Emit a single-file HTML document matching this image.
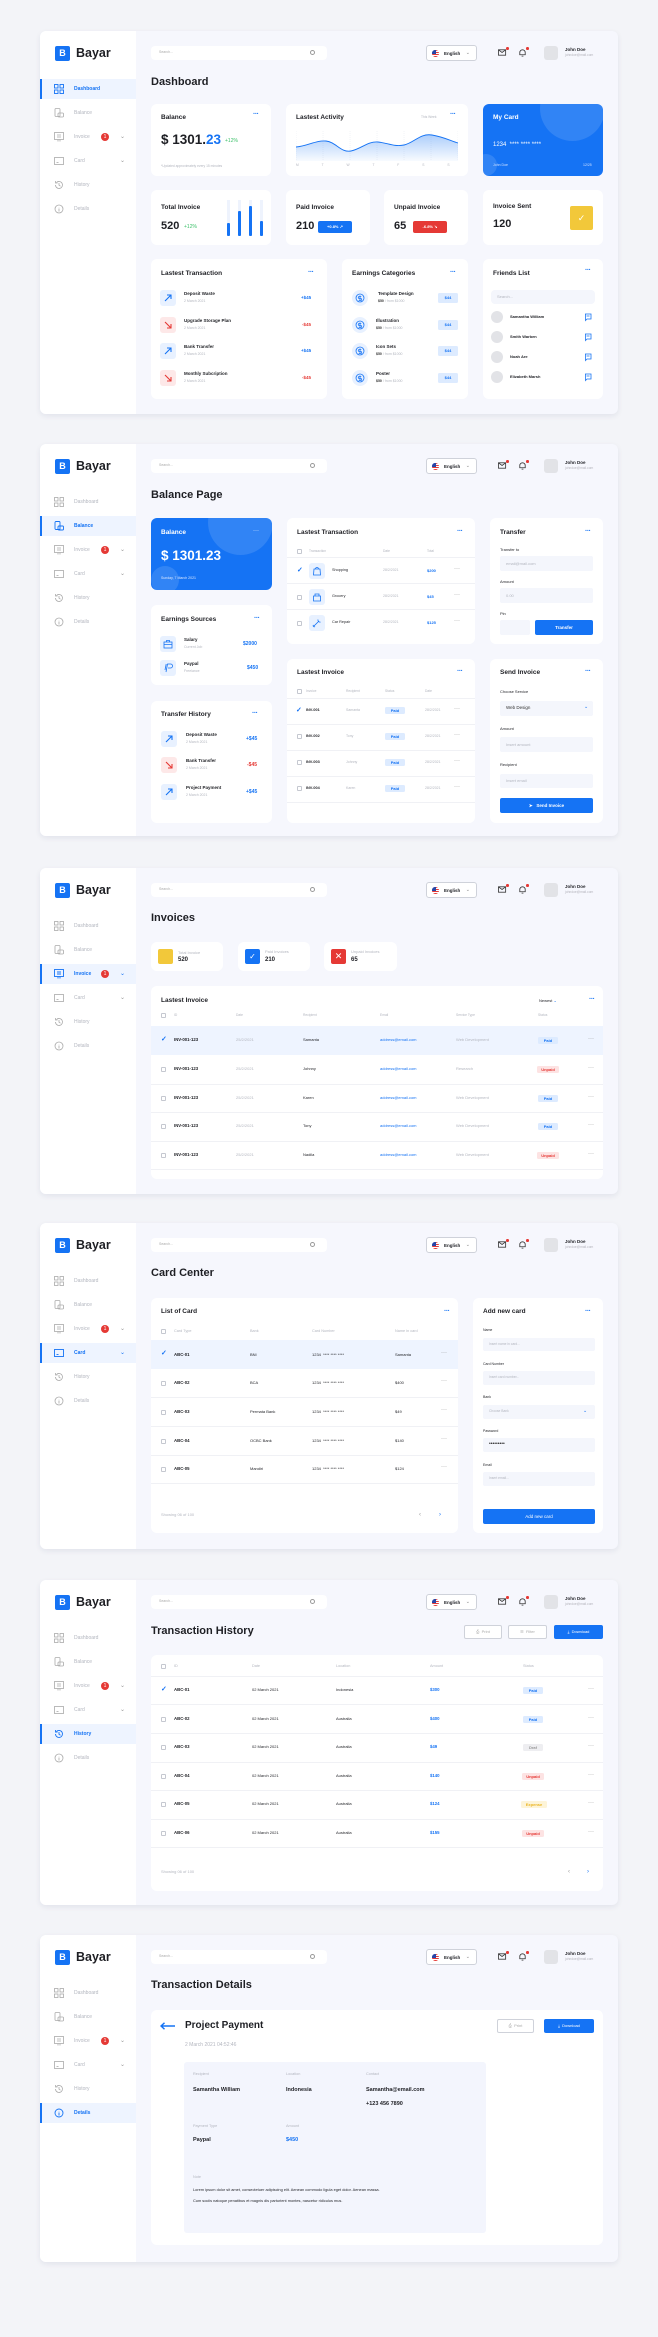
<!DOCTYPE html>
<html><head><meta charset="utf-8">
<style>
*{margin:0;padding:0;box-sizing:border-box}
body{width:658px;height:2337px;background:#f3f4f8;font-family:"Liberation Sans",sans-serif;position:relative;overflow:hidden;color:#1e1f24}
.p{position:absolute;left:40px;width:578px;background:#f6f7fd;border-radius:6px;overflow:hidden;box-shadow:0 2px 6px rgba(30,40,90,.08)}
.side{position:absolute;left:0;top:0;bottom:0;width:96px;background:#fff}
.logo{position:absolute;left:15px;top:15px;width:15px;height:15px;background:#1573f4;border-radius:2px;color:#fff;font-weight:bold;font-size:9px;text-align:center;line-height:15px}
.brand{position:absolute;left:36px;top:16px;font-size:12.5px;font-weight:bold;color:#1e1f24;line-height:1}
.nav{position:absolute;left:0;width:96px;height:20px}
.nav span{position:absolute;left:34px;top:7.5px;font-size:5px;color:#b3b6bf;line-height:1}
.nav svg{position:absolute;left:14px;top:5px;width:10px;height:10px}
.nav.on{background:#eef4ff;box-shadow:inset 2px 0 #1573f4}
.nav.on span{color:#1573f4;font-weight:bold}
.bd{position:absolute;left:61px;top:6px;width:8px;height:8px;border-radius:50%;background:#e53935;color:#fff;font-size:5px;text-align:center;line-height:8px}
.cv{position:absolute;left:80px;top:6px;font-size:6px;color:#999}
.srch{position:absolute;left:111px;top:15px;width:176px;height:14px;background:#fff;border-radius:4px}
.srch span{position:absolute;left:8px;top:5px;font-size:3.5px;color:#aaa;line-height:1}
.mag{position:absolute;right:12px;top:4px;width:5px;height:5px;border:1px solid #999;border-radius:50%}
.lang{position:absolute;left:386px;top:14px;width:51px;height:16px;border:1px solid #cfd2da;border-radius:3px;background:#fff}
.lang span{position:absolute;left:17px;top:5.5px;font-size:4.5px;font-weight:bold;line-height:1}
.flag{position:absolute;left:5px;top:4px;width:7px;height:7px;border-radius:50%;background:repeating-linear-gradient(#e53935 0 1px,#fff 1px 2px)}
.flag:before{content:"";position:absolute;left:0;top:0;width:4px;height:3.5px;background:#2646a8;border-radius:3px 0 0 0}
.lang i.c{position:absolute;right:6px;top:4px;font-size:5px;font-style:normal;color:#888}
.ic{position:absolute;width:9px;height:9px}
.dot{position:absolute;width:2.5px;height:2.5px;border-radius:50%;background:#e53935}
.av{position:absolute;left:504px;top:15px;width:14px;height:14px;border-radius:3px;background:#e2e3e7}
.un{position:absolute;left:525px;top:17px;font-size:4.5px;font-weight:bold;line-height:1}
.um{position:absolute;left:525px;top:23px;font-size:3.3px;color:#b5b5bd;line-height:1}
.tt{position:absolute;left:111px;font-size:11px;font-weight:bold;line-height:1;color:#1e1f24}
.c{position:absolute;background:#fff;border-radius:6px}
.t{position:absolute;line-height:1;white-space:nowrap}
.h{font-size:6.5px;font-weight:bold;color:#1e1f24}
.s{font-size:4px;color:#b3b6bf}
.m{font-size:4.5px;color:#1e1f24}
.b{color:#1573f4}
.r{color:#e53935}
.g{color:#3ec16b}
.dd{position:absolute;font-size:7px;color:#1573f4;line-height:1;letter-spacing:-.5px;font-weight:bold}
.dg{position:absolute;font-size:6px;color:#888;line-height:1}
.ib{position:absolute;width:16px;height:16px;border-radius:3px}
.ib.bl{background:#e8f1ff}.ib.rd{background:#fde8e8}
.ib svg{position:absolute;left:3px;top:3px;width:10px;height:10px}
.pill{position:absolute;height:7px;border-radius:1.5px;font-size:4px;line-height:7px;text-align:center;font-weight:bold}
.pd{background:#ddebff;color:#1573f4}.up{background:#fde3e3;color:#e53935}.dr{background:#eeeef1;color:#999}.ex{background:#fdf4d8;color:#eab422}
.cb{position:absolute;width:5px;height:5px;border:.7px solid #c5c8d0;border-radius:1px}
.ck{position:absolute;font-size:7px;color:#1573f4;line-height:1;font-weight:bold}
.ln{position:absolute;height:1px;background:#f0f1f5}
.hl{position:absolute;background:#eef4ff}
.inp{position:absolute;background:#f4f6fc;border-radius:2px}
.inp span{position:absolute;left:6px;font-size:4px;color:#b3b6bf;line-height:1}
.btn{position:absolute;background:#1573f4;border-radius:2px;color:#fff;font-size:4.5px;text-align:center;font-weight:bold}
.ob{position:absolute;border:1px solid #cfd2da;border-radius:2px;background:#fff;font-size:4px;color:#aaa;text-align:center}
</style></head><body>

<!-- shared sidebar svg icons used inline -->

<!-- PANEL 1 -->
<div class="p" style="top:31px;height:383px">
<div class="side"><div class="logo">B</div><div class="brand">Bayar</div>
<div class="nav on" style="top:48px"><svg viewBox="0 0 10 10" fill="none" stroke="#1573f4" stroke-width=".9"><rect x=".5" y=".5" width="3.5" height="3.5"/><rect x="6" y=".5" width="3.5" height="3.5"/><rect x=".5" y="6" width="3.5" height="3.5"/><rect x="6" y="6" width="3.5" height="3.5"/></svg><span>Dashboard</span></div>
<div class="nav" style="top:72px"><svg viewBox="0 0 10 10" fill="none" stroke="#aaa" stroke-width=".8"><rect x="1" y=".5" width="5" height="8" rx="1"/><rect x="4" y="5" width="5.5" height="4" rx="1"/></svg><span>Balance</span></div>
<div class="nav" style="top:96px"><svg viewBox="0 0 10 10" fill="none" stroke="#aaa" stroke-width=".8"><rect x=".5" y=".5" width="9" height="7"/><path d="M3 3h4M3 5h4M4 7.5v2M6 7.5v2"/></svg><span>Invoice</span><div class="bd">1</div><div class="cv">⌄</div></div>
<div class="nav" style="top:120px"><svg viewBox="0 0 10 10" fill="none" stroke="#aaa" stroke-width=".8"><rect x=".5" y="1.5" width="9" height="7"/><path d="M2.5 6.5h2"/></svg><span>Card</span><div class="cv">⌄</div></div>
<div class="nav" style="top:144px"><svg viewBox="0 0 10 10" fill="none" stroke="#aaa" stroke-width=".8"><path d="M1.5 5a3.5 3.5 0 1 0 1-2.5M1.5 1v2h2M5 3v2.2l1.5 1"/></svg><span>History</span></div>
<div class="nav" style="top:168px"><svg viewBox="0 0 10 10" fill="none" stroke="#aaa" stroke-width=".8"><circle cx="5" cy="5" r="4"/><path d="M5 4.5v3M5 3v.3"/></svg><span>Details</span></div>
</div>
<div class="srch"><span>Search...</span><i class="mag"></i></div>
<div class="lang"><i class="flag"></i><span>English</span><i class="c">⌄</i></div>
<svg class="ic" style="left:458px;top:17px" viewBox="0 0 10 10" fill="none" stroke="#333" stroke-width=".9"><rect x=".5" y="2" width="8" height="6"/><path d="M.5 2l4 3 4-3"/></svg><i class="dot" style="left:466px;top:16px"></i>
<svg class="ic" style="left:478px;top:17px" viewBox="0 0 10 10" fill="none" stroke="#333" stroke-width=".9"><path d="M2 7.5V5a3 3 0 0 1 6 0v2.5H1.5h7M4 9h2"/></svg><i class="dot" style="left:486px;top:16px"></i>
<div class="av"></div><div class="un">John Doe</div><div class="um">johndoe@mail.com</div>
<div class="tt" style="top:46px">Dashboard</div>

<div class="c" style="left:111px;top:73px;width:120px;height:72px">
<div class="t h" style="left:10px;top:11px">Balance</div><div class="dd" style="left:102px;top:7px">···</div>
<div class="t" style="left:10px;top:29px;font-size:13.5px;font-weight:bold">$ 1301.<span class="b">23</span></div>
<div class="t g" style="left:74px;top:35px;font-size:5px">+12%</div>
<div class="t s" style="left:10px;top:61px;font-size:3.3px">*Updated approximately every 15 minutes</div>
</div>
<div class="c" style="left:246px;top:73px;width:182px;height:72px">
<div class="t h" style="left:10px;top:11px">Lastest Activity</div><div class="t s" style="left:135px;top:12px;font-size:3.3px">This Week</div><div class="dd" style="left:164px;top:7px">···</div>
<svg style="position:absolute;left:10px;top:27px" width="162" height="30" viewBox="0 0 162 30"><defs><linearGradient id="gr" x1="0" y1="0" x2="0" y2="1"><stop offset="0" stop-color="#1573f4" stop-opacity=".35"/><stop offset="1" stop-color="#1573f4" stop-opacity=".03"/></linearGradient></defs><g stroke="#e6e8ef" stroke-width=".5" stroke-dasharray="1 1"><path d="M0 0v30M27 0v30M54 0v30M81 0v30M108 0v30M135 0v30M162 0v30"/></g><path d="M0 16C12 15 20 9 30 10S45 22 55 20S72 10 82 11S98 16 108 14S124 2 136 4S155 10 162 12V30H0Z" fill="url(#gr)"/><path d="M0 16C12 15 20 9 30 10S45 22 55 20S72 10 82 11S98 16 108 14S124 2 136 4S155 10 162 12" fill="none" stroke="#1573f4" stroke-width=".9"/></svg>
<div class="t s" style="left:10px;top:60px;font-size:3.3px;word-spacing:22px">M T W T F S S</div>
</div>
<div class="c" style="left:443px;top:73px;width:120px;height:72px;background:#1573f4;overflow:hidden">
<div style="position:absolute;left:57px;top:-28px;width:65px;height:65px;border-radius:50%;background:rgba(255,255,255,.12)"></div>
<div style="position:absolute;left:-8px;top:50px;width:22px;height:22px;border-radius:50%;background:rgba(255,255,255,.12)"></div>
<div class="t h" style="left:10px;top:11px;color:#fff">My Card</div>
<div class="t" style="left:10px;top:38px;font-size:6px;color:#fff">1234 &nbsp;**** **** ****</div>
<div class="t" style="left:10px;top:60px;font-size:3.5px;color:#cfe0ff">John Doe</div><div class="t" style="left:100px;top:60px;font-size:3.5px;color:#cfe0ff">12/25</div>
</div>

<div class="c" style="left:111px;top:159px;width:120px;height:55px">
<div class="t h" style="left:10px;top:15px">Total Invoice</div>
<div class="t" style="left:10px;top:31px;font-size:11px;font-weight:bold">520</div><div class="t g" style="left:33px;top:35px;font-size:5px">+12%</div>
<div style="position:absolute;left:76px;top:10px;width:3px;height:36px;background:#eef3fd"></div><div style="position:absolute;left:76px;top:33px;width:3px;height:13px;background:#1573f4;border-radius:1px"></div>
<div style="position:absolute;left:87px;top:10px;width:3px;height:36px;background:#eef3fd"></div><div style="position:absolute;left:87px;top:21px;width:3px;height:25px;background:#1573f4;border-radius:1px"></div>
<div style="position:absolute;left:98px;top:10px;width:3px;height:36px;background:#eef3fd"></div><div style="position:absolute;left:98px;top:16px;width:3px;height:30px;background:#1573f4;border-radius:1px"></div>
<div style="position:absolute;left:109px;top:10px;width:3px;height:36px;background:#eef3fd"></div><div style="position:absolute;left:109px;top:31px;width:3px;height:15px;background:#1573f4;border-radius:1px"></div>
</div>
<div class="c" style="left:246px;top:159px;width:84px;height:55px">
<div class="t h" style="left:10px;top:15px">Paid Invoice</div>
<div class="t" style="left:10px;top:31px;font-size:11px;font-weight:bold">210</div>
<div class="pill" style="left:32px;top:31px;width:34px;height:12px;line-height:12px;background:#1573f4;color:#fff;border-radius:2px">+0.8% ↗</div>
</div>
<div class="c" style="left:344px;top:159px;width:84px;height:55px">
<div class="t h" style="left:10px;top:15px">Unpaid Invoice</div>
<div class="t" style="left:10px;top:31px;font-size:11px;font-weight:bold">65</div>
<div class="pill" style="left:29px;top:31px;width:34px;height:12px;line-height:12px;background:#e53935;color:#fff;border-radius:2px">-6.8% ↘</div>
</div>
<div class="c" style="left:443px;top:159px;width:120px;height:55px">
<div class="t h" style="left:10px;top:14px">Invoice Sent</div>
<div class="t" style="left:10px;top:29px;font-size:11px;font-weight:bold">120</div>
<div style="position:absolute;left:87px;top:16px;width:23px;height:24px;background:#f2c83a;border-radius:2px;color:#fff;font-size:9px;text-align:center;line-height:24px">✓</div>
</div>

<div class="c" style="left:111px;top:228px;width:176px;height:140px">
<div class="t h" style="left:10px;top:12px">Lastest Transaction</div><div class="dd" style="left:157px;top:10px">···</div>
<div class="ib bl" style="left:9px;top:31px"><svg viewBox="0 0 10 10" fill="none" stroke="#1573f4" stroke-width="1.1"><path d="M2 8l6-6M4 2h4v4"/></svg></div>
<div class="t m" style="left:33px;top:33px;font-weight:bold">Deposit Waste</div><div class="t s" style="left:33px;top:41px;font-size:3.5px">2 March 2021</div><div class="t b" style="left:150px;top:37px;font-size:4.5px;font-weight:bold">+$45</div>
<div class="ib rd" style="left:9px;top:58px"><svg viewBox="0 0 10 10" fill="none" stroke="#e53935" stroke-width="1.1"><path d="M2 2l6 6M8 4v4H4"/></svg></div>
<div class="t m" style="left:33px;top:60px;font-weight:bold">Upgrade Storage Plan</div><div class="t s" style="left:33px;top:68px;font-size:3.5px">2 March 2021</div><div class="t r" style="left:151px;top:64px;font-size:4.5px;font-weight:bold">-$45</div>
<div class="ib bl" style="left:9px;top:84px"><svg viewBox="0 0 10 10" fill="none" stroke="#1573f4" stroke-width="1.1"><path d="M2 8l6-6M4 2h4v4"/></svg></div>
<div class="t m" style="left:33px;top:86px;font-weight:bold">Bank Transfer</div><div class="t s" style="left:33px;top:94px;font-size:3.5px">2 March 2021</div><div class="t b" style="left:150px;top:90px;font-size:4.5px;font-weight:bold">+$45</div>
<div class="ib rd" style="left:9px;top:111px"><svg viewBox="0 0 10 10" fill="none" stroke="#e53935" stroke-width="1.1"><path d="M2 2l6 6M8 4v4H4"/></svg></div>
<div class="t m" style="left:33px;top:113px;font-weight:bold">Monthly Subcription</div><div class="t s" style="left:33px;top:121px;font-size:3.5px">2 March 2021</div><div class="t r" style="left:151px;top:117px;font-size:4.5px;font-weight:bold">-$45</div>
</div>
<div class="c" style="left:302px;top:228px;width:126px;height:140px">
<div class="t h" style="left:10px;top:12px">Earnings Categories</div><div class="dd" style="left:108px;top:10px">···</div>
<div class="ib bl" style="left:10px;top:31px;border-radius:50%"><svg viewBox="0 0 10 10" fill="none" stroke="#1573f4" stroke-width=".8"><circle cx="5" cy="5" r="4"/><path d="M6.3 3.5H4.3a1 1 0 0 0 0 2h1.4a1 1 0 0 1 0 2H3.7M5 2.5v5"/></svg></div>
<div class="t m" style="left:36px;top:33px;font-weight:bold">Template Design</div><div class="t s" style="left:36px;top:41px;font-size:3.5px"><b style="color:#333">$50</b> / from $1000</div><div class="pill pd" style="left:96px;top:34px;width:20px;height:10px;line-height:10px">$44</div>
<div class="ib bl" style="left:10px;top:58px;border-radius:50%"><svg viewBox="0 0 10 10" fill="none" stroke="#1573f4" stroke-width=".8"><circle cx="5" cy="5" r="4"/><path d="M6.3 3.5H4.3a1 1 0 0 0 0 2h1.4a1 1 0 0 1 0 2H3.7M5 2.5v5"/></svg></div>
<div class="t m" style="left:34px;top:60px;font-weight:bold">Illustration</div><div class="t s" style="left:34px;top:68px;font-size:3.5px"><b style="color:#333">$50</b> / from $1000</div><div class="pill pd" style="left:96px;top:61px;width:20px;height:10px;line-height:10px">$44</div>
<div class="ib bl" style="left:10px;top:84px;border-radius:50%"><svg viewBox="0 0 10 10" fill="none" stroke="#1573f4" stroke-width=".8"><circle cx="5" cy="5" r="4"/><path d="M6.3 3.5H4.3a1 1 0 0 0 0 2h1.4a1 1 0 0 1 0 2H3.7M5 2.5v5"/></svg></div>
<div class="t m" style="left:34px;top:86px;font-weight:bold">Icon Sets</div><div class="t s" style="left:34px;top:94px;font-size:3.5px"><b style="color:#333">$50</b> / from $1000</div><div class="pill pd" style="left:96px;top:87px;width:20px;height:10px;line-height:10px">$44</div>
<div class="ib bl" style="left:10px;top:111px;border-radius:50%"><svg viewBox="0 0 10 10" fill="none" stroke="#1573f4" stroke-width=".8"><circle cx="5" cy="5" r="4"/><path d="M6.3 3.5H4.3a1 1 0 0 0 0 2h1.4a1 1 0 0 1 0 2H3.7M5 2.5v5"/></svg></div>
<div class="t m" style="left:34px;top:113px;font-weight:bold">Poster</div><div class="t s" style="left:34px;top:121px;font-size:3.5px"><b style="color:#333">$50</b> / from $1000</div><div class="pill pd" style="left:96px;top:114px;width:20px;height:10px;line-height:10px">$44</div>
</div>
<div class="c" style="left:443px;top:228px;width:120px;height:140px">
<div class="t h" style="left:10px;top:12px">Friends List</div><div class="dd" style="left:102px;top:8px">···</div>
<div class="inp" style="left:8px;top:31px;width:104px;height:14px;border-radius:4px"><span style="top:5px">Search...</span></div>
<div style="position:absolute;left:8px;top:52px;width:12px;height:12px;border-radius:50%;background:#e2e3e7"></div><div class="t m" style="left:27px;top:56px;font-weight:bold;font-size:4px">Samantha William</div>
<div style="position:absolute;left:8px;top:72px;width:12px;height:12px;border-radius:50%;background:#e2e3e7"></div><div class="t m" style="left:27px;top:76px;font-weight:bold;font-size:4px">Smith Warben</div>
<div style="position:absolute;left:8px;top:92px;width:12px;height:12px;border-radius:50%;background:#e2e3e7"></div><div class="t m" style="left:27px;top:96px;font-weight:bold;font-size:4px">Noah Are</div>
<div style="position:absolute;left:8px;top:112px;width:12px;height:12px;border-radius:50%;background:#e2e3e7"></div><div class="t m" style="left:27px;top:116px;font-weight:bold;font-size:4px">Elizabeth Marsh</div>
<svg style="position:absolute;left:101px;top:54px" width="8" height="70" viewBox="0 0 8 70" fill="none" stroke="#1573f4" stroke-width=".8"><path d="M1 1h6v5H3L1.5 7.5V1zM2.5 3h3"/><path d="M1 21h6v5H3l-1.5 1.5V21zM2.5 23h3"/><path d="M1 41h6v5H3l-1.5 1.5V41zM2.5 43h3"/><path d="M1 61h6v5H3l-1.5 1.5V61zM2.5 63h3"/></svg>
</div>
</div>

<!-- PANEL 2 -->
<div class="p" style="top:444px;height:392px">
<div class="side"><div class="logo">B</div><div class="brand">Bayar</div>
<div class="nav" style="top:48px"><svg viewBox="0 0 10 10" fill="none" stroke="#aaa" stroke-width=".8"><rect x=".5" y=".5" width="3.5" height="3.5"/><rect x="6" y=".5" width="3.5" height="3.5"/><rect x=".5" y="6" width="3.5" height="3.5"/><rect x="6" y="6" width="3.5" height="3.5"/></svg><span>Dashboard</span></div>
<div class="nav on" style="top:72px"><svg viewBox="0 0 10 10" fill="none" stroke="#1573f4" stroke-width=".9"><rect x="1" y=".5" width="5" height="8" rx="1"/><rect x="4" y="5" width="5.5" height="4" rx="1"/></svg><span>Balance</span></div>
<div class="nav" style="top:96px"><svg viewBox="0 0 10 10" fill="none" stroke="#aaa" stroke-width=".8"><rect x=".5" y=".5" width="9" height="7"/><path d="M3 3h4M3 5h4M4 7.5v2M6 7.5v2"/></svg><span>Invoice</span><div class="bd">1</div><div class="cv">⌄</div></div>
<div class="nav" style="top:120px"><svg viewBox="0 0 10 10" fill="none" stroke="#aaa" stroke-width=".8"><rect x=".5" y="1.5" width="9" height="7"/><path d="M2.5 6.5h2"/></svg><span>Card</span><div class="cv">⌄</div></div>
<div class="nav" style="top:144px"><svg viewBox="0 0 10 10" fill="none" stroke="#aaa" stroke-width=".8"><path d="M1.5 5a3.5 3.5 0 1 0 1-2.5M1.5 1v2h2M5 3v2.2l1.5 1"/></svg><span>History</span></div>
<div class="nav" style="top:168px"><svg viewBox="0 0 10 10" fill="none" stroke="#aaa" stroke-width=".8"><circle cx="5" cy="5" r="4"/><path d="M5 4.5v3M5 3v.3"/></svg><span>Details</span></div>
</div>
<div class="srch"><span>Search...</span><i class="mag"></i></div>
<div class="lang"><i class="flag"></i><span>English</span><i class="c">⌄</i></div>
<svg class="ic" style="left:458px;top:17px" viewBox="0 0 10 10" fill="none" stroke="#333" stroke-width=".9"><rect x=".5" y="2" width="8" height="6"/><path d="M.5 2l4 3 4-3"/></svg><i class="dot" style="left:466px;top:16px"></i>
<svg class="ic" style="left:478px;top:17px" viewBox="0 0 10 10" fill="none" stroke="#333" stroke-width=".9"><path d="M2 7.5V5a3 3 0 0 1 6 0v2.5H1.5h7M4 9h2"/></svg><i class="dot" style="left:486px;top:16px"></i>
<div class="av"></div><div class="un">John Doe</div><div class="um">johndoe@mail.com</div>
<div class="tt" style="top:46px">Balance Page</div>

<div class="c" style="left:111px;top:74px;width:121px;height:72px;background:#1573f4;overflow:hidden">
<div style="position:absolute;left:57px;top:-28px;width:65px;height:65px;border-radius:50%;background:rgba(255,255,255,.12)"></div>
<div style="position:absolute;left:0px;top:48px;width:28px;height:28px;border-radius:50%;background:rgba(255,255,255,.12)"></div>
<div class="t h" style="left:10px;top:12px;color:#fff">Balance</div><div class="t" style="left:102px;top:10px;color:#fff;font-size:6px">···</div>
<div class="t" style="left:10px;top:31px;font-size:13.5px;font-weight:bold;color:#fff">$ 1301.23</div>
<div class="t" style="left:10px;top:59px;font-size:3.5px;color:#dce8ff">Sunday, 7 March 2021</div>
</div>
<div class="c" style="left:111px;top:161px;width:121px;height:80px">
<div class="t h" style="left:10px;top:12px">Earnings Sources</div><div class="dd" style="left:103px;top:10px">···</div>
<div class="ib bl" style="left:9px;top:31px"><svg viewBox="0 0 10 10" fill="none" stroke="#1573f4" stroke-width=".8"><rect x="1" y="3" width="8" height="6"/><path d="M3.5 3V1.5h3V3M1 5.5h8"/></svg></div>
<div class="t m" style="left:33px;top:33px;font-weight:bold">Salary</div><div class="t s" style="left:33px;top:41px;font-size:3.5px">Current Job</div><div class="t b" style="left:92px;top:37px;font-size:5px;font-weight:bold">$2000</div>
<div class="ib bl" style="left:9px;top:55px"><svg viewBox="0 0 10 10" fill="none" stroke="#1573f4" stroke-width=".8"><path d="M3 9l1.5-8h3a2 2 0 0 1 0 4H5M2 7l1.2-6"/></svg></div>
<div class="t m" style="left:33px;top:57px;font-weight:bold">Paypal</div><div class="t s" style="left:33px;top:65px;font-size:3.5px">Freelance</div><div class="t b" style="left:96px;top:61px;font-size:5px;font-weight:bold">$450</div>
</div>
<div class="c" style="left:111px;top:257px;width:121px;height:122px">
<div class="t h" style="left:10px;top:11px">Transfer History</div><div class="dd" style="left:101px;top:9px">···</div>
<div class="ib bl" style="left:10px;top:30px"><svg viewBox="0 0 10 10" fill="none" stroke="#1573f4" stroke-width="1.1"><path d="M2 8l6-6M4 2h4v4"/></svg></div>
<div class="t m" style="left:35px;top:32px;font-weight:bold">Deposit Waste</div><div class="t s" style="left:35px;top:40px;font-size:3.5px">2 March 2021</div><div class="t b" style="left:95px;top:36px;font-size:5px;font-weight:bold">+$45</div>
<div class="ib rd" style="left:10px;top:56px"><svg viewBox="0 0 10 10" fill="none" stroke="#e53935" stroke-width="1.1"><path d="M2 2l6 6M8 4v4H4"/></svg></div>
<div class="t m" style="left:35px;top:58px;font-weight:bold">Bank Transfer</div><div class="t s" style="left:35px;top:66px;font-size:3.5px">2 March 2021</div><div class="t r" style="left:96px;top:62px;font-size:5px;font-weight:bold">-$45</div>
<div class="ib bl" style="left:10px;top:83px"><svg viewBox="0 0 10 10" fill="none" stroke="#1573f4" stroke-width="1.1"><path d="M2 8l6-6M4 2h4v4"/></svg></div>
<div class="t m" style="left:35px;top:85px;font-weight:bold">Project Payment</div><div class="t s" style="left:35px;top:93px;font-size:3.5px">2 March 2021</div><div class="t b" style="left:95px;top:89px;font-size:5px;font-weight:bold">+$45</div>
</div>

<div class="c" style="left:247px;top:74px;width:188px;height:126px">
<div class="t h" style="left:10px;top:12px">Lastest Transaction</div><div class="dd" style="left:170px;top:10px">···</div>
<div class="cb" style="left:10px;top:31px"></div><div class="t s" style="left:22px;top:32px;font-size:3.3px">Transaction</div><div class="t s" style="left:96px;top:32px;font-size:3.3px">Date</div><div class="t s" style="left:140px;top:32px;font-size:3.3px">Total</div>
<div class="ln" style="left:0;top:39px;width:188px"></div>
<div class="ck" style="left:10px;top:49px">✓</div><div class="ib bl" style="left:22px;top:45px"><svg viewBox="0 0 10 10" fill="none" stroke="#1573f4" stroke-width=".8"><path d="M2 3h6l.5 6h-7zM3.5 3a1.5 1.5 0 0 1 3 0"/></svg></div>
<div class="t m" style="left:45px;top:51px;font-size:3.8px">Shopping</div><div class="t s" style="left:96px;top:51px;font-size:3.5px">28/2/2021</div><div class="t b" style="left:140px;top:51px;font-size:4px;font-weight:bold">$200</div><div class="dg" style="left:167px;top:48px">···</div>
<div class="ln" style="left:0;top:65px;width:188px"></div>
<div class="cb" style="left:10px;top:77px"></div><div class="ib bl" style="left:22px;top:71px"><svg viewBox="0 0 10 10" fill="none" stroke="#1573f4" stroke-width=".8"><path d="M1.5 9V4h7v5zM3 4V2h4v2"/></svg></div>
<div class="t m" style="left:45px;top:77px;font-size:3.8px">Grocery</div><div class="t s" style="left:96px;top:77px;font-size:3.5px">28/2/2021</div><div class="t b" style="left:140px;top:77px;font-size:4px;font-weight:bold">$45</div><div class="dg" style="left:167px;top:74px">···</div>
<div class="ln" style="left:0;top:91px;width:188px"></div>
<div class="cb" style="left:10px;top:103px"></div><div class="ib bl" style="left:22px;top:97px"><svg viewBox="0 0 10 10" fill="none" stroke="#1573f4" stroke-width=".8"><path d="M2 8l5-5M6 1.5a2 2 0 0 0 2.5 2.5M1.5 7a1 1 0 0 0 1.5 1.5"/></svg></div>
<div class="t m" style="left:45px;top:103px;font-size:3.8px">Car Repair</div><div class="t s" style="left:96px;top:103px;font-size:3.5px">28/2/2021</div><div class="t b" style="left:140px;top:103px;font-size:4px;font-weight:bold">$125</div><div class="dg" style="left:167px;top:100px">···</div>
</div>
<div class="c" style="left:247px;top:215px;width:188px;height:164px">
<div class="t h" style="left:10px;top:11px">Lastest Invoice</div><div class="dd" style="left:170px;top:9px">···</div>
<div class="cb" style="left:10px;top:30px"></div><div class="t s" style="left:19px;top:31px;font-size:3.3px">Invoice</div><div class="t s" style="left:59px;top:31px;font-size:3.3px">Recipient</div><div class="t s" style="left:98px;top:31px;font-size:3.3px">Status</div><div class="t s" style="left:138px;top:31px;font-size:3.3px">Date</div>
<div class="ln" style="left:0;top:39px;width:188px"></div>
<div class="ck" style="left:9px;top:48px">✓</div><div class="t m" style="left:19px;top:50px;font-size:3.8px;font-weight:bold">INV-001</div><div class="t s" style="left:59px;top:50px;font-size:3.5px">Samanta</div><div class="pill pd" style="left:98px;top:48px;width:20px">Paid</div><div class="t s" style="left:138px;top:50px;font-size:3.5px">28/2/2021</div><div class="dg" style="left:167px;top:47px">···</div>
<div class="ln" style="left:0;top:65px;width:188px"></div>
<div class="cb" style="left:10px;top:75px"></div><div class="t m" style="left:19px;top:76px;font-size:3.8px;font-weight:bold">INV-002</div><div class="t s" style="left:59px;top:76px;font-size:3.5px">Tony</div><div class="pill pd" style="left:98px;top:74px;width:20px">Paid</div><div class="t s" style="left:138px;top:76px;font-size:3.5px">28/2/2021</div><div class="dg" style="left:167px;top:73px">···</div>
<div class="ln" style="left:0;top:91px;width:188px"></div>
<div class="cb" style="left:10px;top:101px"></div><div class="t m" style="left:19px;top:102px;font-size:3.8px;font-weight:bold">INV-003</div><div class="t s" style="left:59px;top:102px;font-size:3.5px">Johnny</div><div class="pill pd" style="left:98px;top:100px;width:20px">Paid</div><div class="t s" style="left:138px;top:102px;font-size:3.5px">28/2/2021</div><div class="dg" style="left:167px;top:99px">···</div>
<div class="ln" style="left:0;top:117px;width:188px"></div>
<div class="cb" style="left:10px;top:127px"></div><div class="t m" style="left:19px;top:128px;font-size:3.8px;font-weight:bold">INV-004</div><div class="t s" style="left:59px;top:128px;font-size:3.5px">Karen</div><div class="pill pd" style="left:98px;top:126px;width:20px">Paid</div><div class="t s" style="left:138px;top:128px;font-size:3.5px">28/2/2021</div><div class="dg" style="left:167px;top:125px">···</div>
<div class="ln" style="left:0;top:143px;width:188px"></div>
</div>

<div class="c" style="left:450px;top:74px;width:113px;height:126px">
<div class="t h" style="left:10px;top:12px">Transfer</div><div class="dd" style="left:95px;top:10px">···</div>
<div class="t m" style="left:10px;top:30px;font-size:4px">Transfer to</div>
<div class="inp" style="left:10px;top:38px;width:93px;height:15px"><span style="top:5.5px">email@mail.com</span></div>
<div class="t m" style="left:10px;top:62px;font-size:4px">Amount</div>
<div class="inp" style="left:10px;top:70px;width:93px;height:15px"><span style="top:5.5px">0.00</span></div>
<div class="t m" style="left:10px;top:94px;font-size:4px">Pin</div>
<div class="inp" style="left:10px;top:102px;width:30px;height:15px"></div>
<div class="btn" style="left:45px;top:102px;width:58px;height:15px;line-height:15px">Transfer</div>
</div>
<div class="c" style="left:450px;top:215px;width:113px;height:164px">
<div class="t h" style="left:10px;top:11px">Send Invoice</div><div class="dd" style="left:95px;top:9px">···</div>
<div class="t m" style="left:10px;top:31px;font-size:4px">Choose Service</div>
<div class="inp" style="left:10px;top:42px;width:93px;height:15px"><span style="top:5px;color:#333;font-size:4.5px">Web Design</span><span style="left:84px;top:4px;color:#1573f4;font-size:5px">⌄</span></div>
<div class="t m" style="left:10px;top:68px;font-size:4px">Amount</div>
<div class="inp" style="left:10px;top:78px;width:93px;height:15px"><span style="top:5.5px">Insert amount</span></div>
<div class="t m" style="left:10px;top:104px;font-size:4px">Recipient</div>
<div class="inp" style="left:10px;top:115px;width:93px;height:14px"><span style="top:5px">Insert email</span></div>
<div class="btn" style="left:10px;top:139px;width:93px;height:15px;line-height:15px">➤&nbsp;&nbsp; Send Invoice</div>
</div>
</div>

<!-- PANEL 3 -->
<div class="p" style="top:868px;height:326px">
<div class="side"><div class="logo">B</div><div class="brand">Bayar</div>
<div class="nav" style="top:48px"><svg viewBox="0 0 10 10" fill="none" stroke="#aaa" stroke-width=".8"><rect x=".5" y=".5" width="3.5" height="3.5"/><rect x="6" y=".5" width="3.5" height="3.5"/><rect x=".5" y="6" width="3.5" height="3.5"/><rect x="6" y="6" width="3.5" height="3.5"/></svg><span>Dashboard</span></div>
<div class="nav" style="top:72px"><svg viewBox="0 0 10 10" fill="none" stroke="#aaa" stroke-width=".8"><rect x="1" y=".5" width="5" height="8" rx="1"/><rect x="4" y="5" width="5.5" height="4" rx="1"/></svg><span>Balance</span></div>
<div class="nav on" style="top:96px"><svg viewBox="0 0 10 10" fill="none" stroke="#1573f4" stroke-width=".9"><rect x=".5" y=".5" width="9" height="7"/><path d="M3 3h4M3 5h4M4 7.5v2M6 7.5v2"/></svg><span>Invoice</span><div class="bd">1</div><div class="cv" style="color:#1573f4">⌄</div></div>
<div class="nav" style="top:120px"><svg viewBox="0 0 10 10" fill="none" stroke="#aaa" stroke-width=".8"><rect x=".5" y="1.5" width="9" height="7"/><path d="M2.5 6.5h2"/></svg><span>Card</span><div class="cv">⌄</div></div>
<div class="nav" style="top:144px"><svg viewBox="0 0 10 10" fill="none" stroke="#aaa" stroke-width=".8"><path d="M1.5 5a3.5 3.5 0 1 0 1-2.5M1.5 1v2h2M5 3v2.2l1.5 1"/></svg><span>History</span></div>
<div class="nav" style="top:168px"><svg viewBox="0 0 10 10" fill="none" stroke="#aaa" stroke-width=".8"><circle cx="5" cy="5" r="4"/><path d="M5 4.5v3M5 3v.3"/></svg><span>Details</span></div>
</div>
<div class="srch"><span>Search...</span><i class="mag"></i></div>
<div class="lang"><i class="flag"></i><span>English</span><i class="c">⌄</i></div>
<svg class="ic" style="left:458px;top:17px" viewBox="0 0 10 10" fill="none" stroke="#333" stroke-width=".9"><rect x=".5" y="2" width="8" height="6"/><path d="M.5 2l4 3 4-3"/></svg><i class="dot" style="left:466px;top:16px"></i>
<svg class="ic" style="left:478px;top:17px" viewBox="0 0 10 10" fill="none" stroke="#333" stroke-width=".9"><path d="M2 7.5V5a3 3 0 0 1 6 0v2.5H1.5h7M4 9h2"/></svg><i class="dot" style="left:486px;top:16px"></i>
<div class="av"></div><div class="un">John Doe</div><div class="um">johndoe@mail.com</div>
<div class="tt" style="top:45px">Invoices</div>

<div class="c" style="left:111px;top:74px;width:72px;height:29px"><div style="position:absolute;left:7px;top:7px;width:15px;height:15px;background:#f2c83a;border-radius:2px"></div><div class="t s" style="left:27px;top:9px">Total Invoice</div><div class="t" style="left:27px;top:15px;font-size:6px;font-weight:bold">520</div></div>
<div class="c" style="left:198px;top:74px;width:72px;height:29px"><div style="position:absolute;left:7px;top:7px;width:15px;height:15px;background:#1573f4;border-radius:2px;color:#fff;font-size:8px;text-align:center;line-height:15px">✓</div><div class="t s" style="left:27px;top:8px">Paid Invoices</div><div class="t" style="left:27px;top:15px;font-size:6px;font-weight:bold">210</div></div>
<div class="c" style="left:284px;top:74px;width:73px;height:29px"><div style="position:absolute;left:7px;top:7px;width:15px;height:15px;background:#e53935;border-radius:2px;color:#fff;font-size:9px;text-align:center;line-height:15px">✕</div><div class="t s" style="left:27px;top:8px">Unpaid Invoices</div><div class="t" style="left:27px;top:15px;font-size:6px;font-weight:bold">65</div></div>

<div class="c" style="left:111px;top:118px;width:452px;height:193px;overflow:hidden">
<div class="t h" style="left:10px;top:12px">Lastest Invoice</div><div class="t m" style="left:388px;top:13px;font-size:4px">Newest <span class="b">⌄</span></div><div class="dd" style="left:438px;top:10px">···</div>
<div class="cb" style="left:10px;top:27px"></div>
<div class="t s" style="left:23px;top:28px;font-size:3.3px">ID</div><div class="t s" style="left:85px;top:28px;font-size:3.3px">Date</div><div class="t s" style="left:152px;top:28px;font-size:3.3px">Recipient</div><div class="t s" style="left:229px;top:28px;font-size:3.3px">Email</div><div class="t s" style="left:305px;top:28px;font-size:3.3px">Service Type</div><div class="t s" style="left:387px;top:28px;font-size:3.3px">Status</div>
<div class="hl" style="left:0;top:40px;width:452px;height:29px"></div>
<div class="ck" style="left:10px;top:50px">✓</div><div class="t m" style="left:23px;top:52px;font-weight:bold;font-size:4.3px">INV-001-123</div><div class="t s" style="left:85px;top:52px;font-size:4px">25/2/2021</div><div class="t m" style="left:152px;top:52px;font-size:4px">Samanta</div><div class="t b" style="left:229px;top:52px;font-size:4px">address@email.com</div><div class="t s" style="left:305px;top:52px;font-size:4px">Web Development</div><div class="pill pd" style="left:387px;top:51px;width:20px">Paid</div><div class="dg" style="left:437px;top:50px">···</div>
<div class="ln" style="left:0;top:98px;width:452px"></div>
<div class="cb" style="left:10px;top:81px"></div><div class="t m" style="left:23px;top:81px;font-weight:bold;font-size:4.3px">INV-001-123</div><div class="t s" style="left:85px;top:81px;font-size:4px">25/2/2021</div><div class="t m" style="left:152px;top:81px;font-size:4px">Johnny</div><div class="t b" style="left:229px;top:81px;font-size:4px">address@email.com</div><div class="t s" style="left:305px;top:81px;font-size:4px">Research</div><div class="pill up" style="left:386px;top:80px;width:22px">Unpaid</div><div class="dg" style="left:437px;top:79px">···</div>
<div class="ln" style="left:0;top:126px;width:452px"></div>
<div class="cb" style="left:10px;top:110px"></div><div class="t m" style="left:23px;top:110px;font-weight:bold;font-size:4.3px">INV-001-123</div><div class="t s" style="left:85px;top:110px;font-size:4px">25/2/2021</div><div class="t m" style="left:152px;top:110px;font-size:4px">Karen</div><div class="t b" style="left:229px;top:110px;font-size:4px">address@email.com</div><div class="t s" style="left:305px;top:110px;font-size:4px">Web Development</div><div class="pill pd" style="left:387px;top:109px;width:20px">Paid</div><div class="dg" style="left:437px;top:108px">···</div>
<div class="ln" style="left:0;top:155px;width:452px"></div>
<div class="cb" style="left:10px;top:138px"></div><div class="t m" style="left:23px;top:138px;font-weight:bold;font-size:4.3px">INV-001-123</div><div class="t s" style="left:85px;top:138px;font-size:4px">25/2/2021</div><div class="t m" style="left:152px;top:138px;font-size:4px">Tony</div><div class="t b" style="left:229px;top:138px;font-size:4px">address@email.com</div><div class="t s" style="left:305px;top:138px;font-size:4px">Web Development</div><div class="pill pd" style="left:387px;top:137px;width:20px">Paid</div><div class="dg" style="left:437px;top:136px">···</div>
<div class="cb" style="left:10px;top:167px"></div><div class="t m" style="left:23px;top:167px;font-weight:bold;font-size:4.3px">INV-001-123</div><div class="t s" style="left:85px;top:167px;font-size:4px">25/2/2021</div><div class="t m" style="left:152px;top:167px;font-size:4px">Nadila</div><div class="t b" style="left:229px;top:167px;font-size:4px">address@email.com</div><div class="t s" style="left:305px;top:167px;font-size:4px">Web Development</div><div class="pill up" style="left:386px;top:166px;width:22px">Unpaid</div><div class="dg" style="left:437px;top:165px">···</div>
<div class="ln" style="left:0;top:183px;width:452px"></div>
</div>
</div>

<!-- PANEL 4 -->
<div class="p" style="top:1223px;height:326px">
<div class="side"><div class="logo">B</div><div class="brand">Bayar</div>
<div class="nav" style="top:48px"><svg viewBox="0 0 10 10" fill="none" stroke="#aaa" stroke-width=".8"><rect x=".5" y=".5" width="3.5" height="3.5"/><rect x="6" y=".5" width="3.5" height="3.5"/><rect x=".5" y="6" width="3.5" height="3.5"/><rect x="6" y="6" width="3.5" height="3.5"/></svg><span>Dashboard</span></div>
<div class="nav" style="top:72px"><svg viewBox="0 0 10 10" fill="none" stroke="#aaa" stroke-width=".8"><rect x="1" y=".5" width="5" height="8" rx="1"/><rect x="4" y="5" width="5.5" height="4" rx="1"/></svg><span>Balance</span></div>
<div class="nav" style="top:96px"><svg viewBox="0 0 10 10" fill="none" stroke="#aaa" stroke-width=".8"><rect x=".5" y=".5" width="9" height="7"/><path d="M3 3h4M3 5h4M4 7.5v2M6 7.5v2"/></svg><span>Invoice</span><div class="bd">1</div><div class="cv">⌄</div></div>
<div class="nav on" style="top:120px"><svg viewBox="0 0 10 10" fill="none" stroke="#1573f4" stroke-width=".9"><rect x=".5" y="1.5" width="9" height="7"/><path d="M2.5 6.5h2"/></svg><span>Card</span><div class="cv" style="color:#1573f4">⌄</div></div>
<div class="nav" style="top:144px"><svg viewBox="0 0 10 10" fill="none" stroke="#aaa" stroke-width=".8"><path d="M1.5 5a3.5 3.5 0 1 0 1-2.5M1.5 1v2h2M5 3v2.2l1.5 1"/></svg><span>History</span></div>
<div class="nav" style="top:168px"><svg viewBox="0 0 10 10" fill="none" stroke="#aaa" stroke-width=".8"><circle cx="5" cy="5" r="4"/><path d="M5 4.5v3M5 3v.3"/></svg><span>Details</span></div>
</div>
<div class="srch"><span>Search...</span><i class="mag"></i></div>
<div class="lang"><i class="flag"></i><span>English</span><i class="c">⌄</i></div>
<svg class="ic" style="left:458px;top:17px" viewBox="0 0 10 10" fill="none" stroke="#333" stroke-width=".9"><rect x=".5" y="2" width="8" height="6"/><path d="M.5 2l4 3 4-3"/></svg><i class="dot" style="left:466px;top:16px"></i>
<svg class="ic" style="left:478px;top:17px" viewBox="0 0 10 10" fill="none" stroke="#333" stroke-width=".9"><path d="M2 7.5V5a3 3 0 0 1 6 0v2.5H1.5h7M4 9h2"/></svg><i class="dot" style="left:486px;top:16px"></i>
<div class="av"></div><div class="un">John Doe</div><div class="um">johndoe@mail.com</div>
<div class="tt" style="top:45px">Card Center</div>

<div class="c" style="left:111px;top:75px;width:307px;height:235px;overflow:hidden">
<div class="t h" style="left:10px;top:11px">List of Card</div><div class="dd" style="left:293px;top:10px">···</div>
<div class="cb" style="left:10px;top:31px"></div>
<div class="t s" style="left:23px;top:32px;font-size:3.8px">Card Type</div><div class="t s" style="left:99px;top:32px;font-size:3.8px">Bank</div><div class="t s" style="left:161px;top:32px;font-size:3.8px">Card Number</div><div class="t s" style="left:244px;top:32px;font-size:3.8px">Name in card</div>
<div class="hl" style="left:0;top:42px;width:307px;height:29px"></div>
<div class="ck" style="left:10px;top:52px">✓</div><div class="t m" style="left:23px;top:55px;font-weight:bold;font-size:4.3px">ABC-01</div><div class="t m" style="left:99px;top:55px;font-size:4px">BNI</div><div class="t m" style="left:161px;top:55px;font-size:4px">1234 &nbsp;**** **** ****</div><div class="t m" style="left:244px;top:55px;font-size:4px">Samanta</div><div class="dg" style="left:290px;top:52px">···</div>
<div class="ln" style="left:0;top:99px;width:307px"></div>
<div class="cb" style="left:10px;top:83px"></div><div class="t m" style="left:23px;top:83px;font-weight:bold;font-size:4.3px">ABC-02</div><div class="t m" style="left:99px;top:83px;font-size:4px">BCA</div><div class="t m" style="left:161px;top:83px;font-size:4px">1234 &nbsp;**** **** ****</div><div class="t m" style="left:244px;top:83px;font-size:4px">$400</div><div class="dg" style="left:290px;top:80px">···</div>
<div class="ln" style="left:0;top:128px;width:307px"></div>
<div class="cb" style="left:10px;top:112px"></div><div class="t m" style="left:23px;top:112px;font-weight:bold;font-size:4.3px">ABC-03</div><div class="t m" style="left:99px;top:112px;font-size:4px">Permata Bank</div><div class="t m" style="left:161px;top:112px;font-size:4px">1234 &nbsp;**** **** ****</div><div class="t m" style="left:244px;top:112px;font-size:4px">$49</div><div class="dg" style="left:290px;top:109px">···</div>
<div class="ln" style="left:0;top:157px;width:307px"></div>
<div class="cb" style="left:10px;top:141px"></div><div class="t m" style="left:23px;top:141px;font-weight:bold;font-size:4.3px">ABC-04</div><div class="t m" style="left:99px;top:141px;font-size:4px">OCBC Bank</div><div class="t m" style="left:161px;top:141px;font-size:4px">1234 &nbsp;**** **** ****</div><div class="t m" style="left:244px;top:141px;font-size:4px">$140</div><div class="dg" style="left:290px;top:138px">···</div>
<div class="ln" style="left:0;top:185px;width:307px"></div>
<div class="cb" style="left:10px;top:169px"></div><div class="t m" style="left:23px;top:169px;font-weight:bold;font-size:4.3px">ABC-05</div><div class="t m" style="left:99px;top:169px;font-size:4px">Mandiri</div><div class="t m" style="left:161px;top:169px;font-size:4px">1234 &nbsp;**** **** ****</div><div class="t m" style="left:244px;top:169px;font-size:4px">$124</div><div class="dg" style="left:290px;top:166px">···</div>
<div class="t s" style="left:10px;top:215px">Showing 06 of 100</div><div class="t" style="left:268px;top:214px;font-size:6px;color:#999">‹</div><div class="t b" style="left:288px;top:214px;font-size:6px">›</div>
</div>
<div class="c" style="left:433px;top:75px;width:130px;height:235px">
<div class="t h" style="left:10px;top:11px">Add new card</div><div class="dd" style="left:112px;top:10px">···</div>
<div class="t m" style="left:10px;top:31px;font-size:3.5px">Name</div><div class="inp" style="left:10px;top:40px;width:112px;height:13px"><span style="top:4.5px;font-size:3.3px">Insert name in card...</span></div>
<div class="t m" style="left:10px;top:65px;font-size:3.5px">Card Number</div><div class="inp" style="left:10px;top:73px;width:112px;height:14px"><span style="top:5px;font-size:3.3px">Insert card number...</span></div>
<div class="t m" style="left:10px;top:98px;font-size:3.5px">Bank</div><div class="inp" style="left:10px;top:107px;width:112px;height:14px"><span style="top:5px;font-size:3.3px">Choose Bank</span><span style="left:100px;top:3.5px;color:#1573f4;font-size:5px">⌄</span></div>
<div class="t m" style="left:10px;top:132px;font-size:3.5px">Password</div><div class="inp" style="left:10px;top:140px;width:112px;height:14px"><span style="top:4px;color:#222;font-size:5px">•••••••••</span></div>
<div class="t m" style="left:10px;top:166px;font-size:3.5px">Email</div><div class="inp" style="left:10px;top:174px;width:112px;height:14px"><span style="top:5px;font-size:3.3px">Insert email...</span></div>
<div class="btn" style="left:10px;top:211px;width:112px;height:15px;line-height:15px;font-weight:normal">Add new card</div>
</div>
</div>

<!-- PANEL 5 -->
<div class="p" style="top:1580px;height:325px">
<div class="side"><div class="logo">B</div><div class="brand">Bayar</div>
<div class="nav" style="top:48px"><svg viewBox="0 0 10 10" fill="none" stroke="#aaa" stroke-width=".8"><rect x=".5" y=".5" width="3.5" height="3.5"/><rect x="6" y=".5" width="3.5" height="3.5"/><rect x=".5" y="6" width="3.5" height="3.5"/><rect x="6" y="6" width="3.5" height="3.5"/></svg><span>Dashboard</span></div>
<div class="nav" style="top:72px"><svg viewBox="0 0 10 10" fill="none" stroke="#aaa" stroke-width=".8"><rect x="1" y=".5" width="5" height="8" rx="1"/><rect x="4" y="5" width="5.5" height="4" rx="1"/></svg><span>Balance</span></div>
<div class="nav" style="top:96px"><svg viewBox="0 0 10 10" fill="none" stroke="#aaa" stroke-width=".8"><rect x=".5" y=".5" width="9" height="7"/><path d="M3 3h4M3 5h4M4 7.5v2M6 7.5v2"/></svg><span>Invoice</span><div class="bd">1</div><div class="cv">⌄</div></div>
<div class="nav" style="top:120px"><svg viewBox="0 0 10 10" fill="none" stroke="#aaa" stroke-width=".8"><rect x=".5" y="1.5" width="9" height="7"/><path d="M2.5 6.5h2"/></svg><span>Card</span><div class="cv">⌄</div></div>
<div class="nav on" style="top:144px"><svg viewBox="0 0 10 10" fill="none" stroke="#1573f4" stroke-width=".9"><path d="M1.5 5a3.5 3.5 0 1 0 1-2.5M1.5 1v2h2M5 3v2.2l1.5 1"/></svg><span>History</span></div>
<div class="nav" style="top:168px"><svg viewBox="0 0 10 10" fill="none" stroke="#aaa" stroke-width=".8"><circle cx="5" cy="5" r="4"/><path d="M5 4.5v3M5 3v.3"/></svg><span>Details</span></div>
</div>
<div class="srch"><span>Search...</span><i class="mag"></i></div>
<div class="lang"><i class="flag"></i><span>English</span><i class="c">⌄</i></div>
<svg class="ic" style="left:458px;top:17px" viewBox="0 0 10 10" fill="none" stroke="#333" stroke-width=".9"><rect x=".5" y="2" width="8" height="6"/><path d="M.5 2l4 3 4-3"/></svg><i class="dot" style="left:466px;top:16px"></i>
<svg class="ic" style="left:478px;top:17px" viewBox="0 0 10 10" fill="none" stroke="#333" stroke-width=".9"><path d="M2 7.5V5a3 3 0 0 1 6 0v2.5H1.5h7M4 9h2"/></svg><i class="dot" style="left:486px;top:16px"></i>
<div class="av"></div><div class="un">John Doe</div><div class="um">johndoe@mail.com</div>
<div class="tt" style="top:46px">Transaction History</div>
<div class="ob" style="left:424px;top:45px;width:38px;height:14px;line-height:12px">⎙ &nbsp;Print</div>
<div class="ob" style="left:468px;top:45px;width:39px;height:14px;line-height:12px">☰ &nbsp;Filter</div>
<div class="btn" style="left:514px;top:45px;width:49px;height:14px;line-height:14px;font-weight:normal;font-size:4px">⤓ &nbsp;Download</div>

<div class="c" style="left:111px;top:75px;width:452px;height:236px;overflow:hidden">
<div class="cb" style="left:10px;top:9px"></div>
<div class="t s" style="left:23px;top:10px;font-size:3.8px">ID</div><div class="t s" style="left:101px;top:10px;font-size:3.8px">Date</div><div class="t s" style="left:185px;top:10px;font-size:3.8px">Location</div><div class="t s" style="left:279px;top:10px;font-size:3.8px">Amount</div><div class="t s" style="left:372px;top:10px;font-size:3.8px">Status</div>
<div class="ln" style="left:0;top:21px;width:452px"></div>
<div class="ck" style="left:10px;top:31px">✓</div><div class="t m" style="left:23px;top:33px;font-weight:bold;font-size:4.3px">ABC-01</div><div class="t m" style="left:101px;top:33px;font-size:4px">02 March 2021</div><div class="t m" style="left:185px;top:33px;font-size:4px">Indonesia</div><div class="t b" style="left:279px;top:33px;font-size:4.3px;font-weight:bold">$300</div><div class="pill pd" style="left:372px;top:32px;width:20px">Paid</div><div class="dg" style="left:437px;top:31px">···</div>
<div class="ln" style="left:0;top:49px;width:452px"></div>
<div class="cb" style="left:10px;top:62px"></div><div class="t m" style="left:23px;top:62px;font-weight:bold;font-size:4.3px">ABC-02</div><div class="t m" style="left:101px;top:62px;font-size:4px">02 March 2021</div><div class="t m" style="left:185px;top:62px;font-size:4px">Australia</div><div class="t b" style="left:279px;top:62px;font-size:4.3px;font-weight:bold">$400</div><div class="pill pd" style="left:372px;top:61px;width:20px">Paid</div><div class="dg" style="left:437px;top:60px">···</div>
<div class="ln" style="left:0;top:78px;width:452px"></div>
<div class="cb" style="left:10px;top:90px"></div><div class="t m" style="left:23px;top:90px;font-weight:bold;font-size:4.3px">ABC-03</div><div class="t m" style="left:101px;top:90px;font-size:4px">02 March 2021</div><div class="t m" style="left:185px;top:90px;font-size:4px">Australia</div><div class="t b" style="left:279px;top:90px;font-size:4.3px;font-weight:bold">$49</div><div class="pill dr" style="left:372px;top:89px;width:20px">Draf</div><div class="dg" style="left:437px;top:88px">···</div>
<div class="ln" style="left:0;top:107px;width:452px"></div>
<div class="cb" style="left:10px;top:119px"></div><div class="t m" style="left:23px;top:119px;font-weight:bold;font-size:4.3px">ABC-04</div><div class="t m" style="left:101px;top:119px;font-size:4px">02 March 2021</div><div class="t m" style="left:185px;top:119px;font-size:4px">Australia</div><div class="t b" style="left:279px;top:119px;font-size:4.3px;font-weight:bold">$140</div><div class="pill up" style="left:371px;top:118px;width:22px">Unpaid</div><div class="dg" style="left:437px;top:117px">···</div>
<div class="ln" style="left:0;top:135px;width:452px"></div>
<div class="cb" style="left:10px;top:147px"></div><div class="t m" style="left:23px;top:147px;font-weight:bold;font-size:4.3px">ABC-05</div><div class="t m" style="left:101px;top:147px;font-size:4px">02 March 2021</div><div class="t m" style="left:185px;top:147px;font-size:4px">Australia</div><div class="t b" style="left:279px;top:147px;font-size:4.3px;font-weight:bold">$124</div><div class="pill ex" style="left:370px;top:146px;width:26px">Expense</div><div class="dg" style="left:437px;top:145px">···</div>
<div class="ln" style="left:0;top:164px;width:452px"></div>
<div class="cb" style="left:10px;top:176px"></div><div class="t m" style="left:23px;top:176px;font-weight:bold;font-size:4.3px">ABC-06</div><div class="t m" style="left:101px;top:176px;font-size:4px">02 March 2021</div><div class="t m" style="left:185px;top:176px;font-size:4px">Australia</div><div class="t b" style="left:279px;top:176px;font-size:4.3px;font-weight:bold">$155</div><div class="pill up" style="left:371px;top:175px;width:22px">Unpaid</div><div class="dg" style="left:437px;top:174px">···</div>
<div class="ln" style="left:0;top:192px;width:452px"></div>
<div class="t s" style="left:10px;top:215px">Showing 06 of 100</div><div class="t" style="left:417px;top:214px;font-size:6px;color:#999">‹</div><div class="t b" style="left:436px;top:214px;font-size:6px">›</div>
</div>
</div>

<!-- PANEL 6 -->
<div class="p" style="top:1935px;height:327px">
<div class="side"><div class="logo">B</div><div class="brand">Bayar</div>
<div class="nav" style="top:48px"><svg viewBox="0 0 10 10" fill="none" stroke="#aaa" stroke-width=".8"><rect x=".5" y=".5" width="3.5" height="3.5"/><rect x="6" y=".5" width="3.5" height="3.5"/><rect x=".5" y="6" width="3.5" height="3.5"/><rect x="6" y="6" width="3.5" height="3.5"/></svg><span>Dashboard</span></div>
<div class="nav" style="top:72px"><svg viewBox="0 0 10 10" fill="none" stroke="#aaa" stroke-width=".8"><rect x="1" y=".5" width="5" height="8" rx="1"/><rect x="4" y="5" width="5.5" height="4" rx="1"/></svg><span>Balance</span></div>
<div class="nav" style="top:96px"><svg viewBox="0 0 10 10" fill="none" stroke="#aaa" stroke-width=".8"><rect x=".5" y=".5" width="9" height="7"/><path d="M3 3h4M3 5h4M4 7.5v2M6 7.5v2"/></svg><span>Invoice</span><div class="bd">1</div><div class="cv">⌄</div></div>
<div class="nav" style="top:120px"><svg viewBox="0 0 10 10" fill="none" stroke="#aaa" stroke-width=".8"><rect x=".5" y="1.5" width="9" height="7"/><path d="M2.5 6.5h2"/></svg><span>Card</span><div class="cv">⌄</div></div>
<div class="nav" style="top:144px"><svg viewBox="0 0 10 10" fill="none" stroke="#aaa" stroke-width=".8"><path d="M1.5 5a3.5 3.5 0 1 0 1-2.5M1.5 1v2h2M5 3v2.2l1.5 1"/></svg><span>History</span></div>
<div class="nav on" style="top:168px"><svg viewBox="0 0 10 10" fill="none" stroke="#1573f4" stroke-width=".9"><circle cx="5" cy="5" r="4"/><path d="M5 4.5v3M5 3v.3"/></svg><span>Details</span></div>
</div>
<div class="srch"><span>Search...</span><i class="mag"></i></div>
<div class="lang"><i class="flag"></i><span>English</span><i class="c">⌄</i></div>
<svg class="ic" style="left:458px;top:17px" viewBox="0 0 10 10" fill="none" stroke="#333" stroke-width=".9"><rect x=".5" y="2" width="8" height="6"/><path d="M.5 2l4 3 4-3"/></svg><i class="dot" style="left:466px;top:16px"></i>
<svg class="ic" style="left:478px;top:17px" viewBox="0 0 10 10" fill="none" stroke="#333" stroke-width=".9"><path d="M2 7.5V5a3 3 0 0 1 6 0v2.5H1.5h7M4 9h2"/></svg><i class="dot" style="left:486px;top:16px"></i>
<div class="av"></div><div class="un">John Doe</div><div class="um">johndoe@mail.com</div>
<div class="tt" style="top:45px">Transaction Details</div>

<div class="c" style="left:111px;top:75px;width:452px;height:235px">
<svg style="position:absolute;left:9px;top:12px" width="16" height="8" viewBox="0 0 16 8" fill="none" stroke="#1573f4" stroke-width="1.4"><path d="M15 4H1M4.5 .8L1 4l3.5 3.2"/></svg>
<div class="t" style="left:34px;top:11px;font-size:10px;font-weight:bold">Project Payment</div>
<div class="t s" style="left:34px;top:33px;font-size:5px">2 March 2021 04:52:46</div>
<div class="ob" style="left:346px;top:9px;width:37px;height:14px;line-height:12px">⎙ &nbsp;Print</div>
<div class="btn" style="left:393px;top:9px;width:50px;height:14px;line-height:14px;font-weight:normal;font-size:4px">⤓ &nbsp;Download</div>
<div style="position:absolute;left:33px;top:52px;width:302px;height:171px;background:#f3f5fd;border-radius:3px">
<div class="t s" style="left:9px;top:11px;font-size:3.8px">Recipient</div><div class="t" style="left:9px;top:26px;font-size:5.5px;font-weight:bold">Samantha William</div>
<div class="t s" style="left:102px;top:11px;font-size:3.8px">Location</div><div class="t" style="left:102px;top:26px;font-size:5.5px;font-weight:bold">Indonesia</div>
<div class="t s" style="left:182px;top:11px;font-size:3.8px">Contact</div><div class="t" style="left:182px;top:26px;font-size:5.5px;font-weight:bold">Samantha@email.com</div><div class="t" style="left:182px;top:40px;font-size:5.5px;font-weight:bold">+123 456 7890</div>
<div class="t s" style="left:9px;top:63px;font-size:3.8px">Payment Type</div><div class="t" style="left:9px;top:76px;font-size:5.5px;font-weight:bold">Paypal</div>
<div class="t s" style="left:102px;top:63px;font-size:3.8px">Amount</div><div class="t b" style="left:102px;top:76px;font-size:5.5px;font-weight:bold">$450</div>
<div class="t s" style="left:9px;top:114px;font-size:3.8px">Note</div>
<div class="t m" style="left:9px;top:126px;font-size:3.9px">Lorem ipsum dolor sit amet, consectetuer adipiscing elit. Aenean commodo ligula eget dolor. Aenean massa.</div>
<div class="t m" style="left:9px;top:137px;font-size:3.9px">Cum sociis natoque penatibus et magnis dis parturient montes, nascetur ridiculus mus.</div>
</div>
</div>
</div>

</body></html>
